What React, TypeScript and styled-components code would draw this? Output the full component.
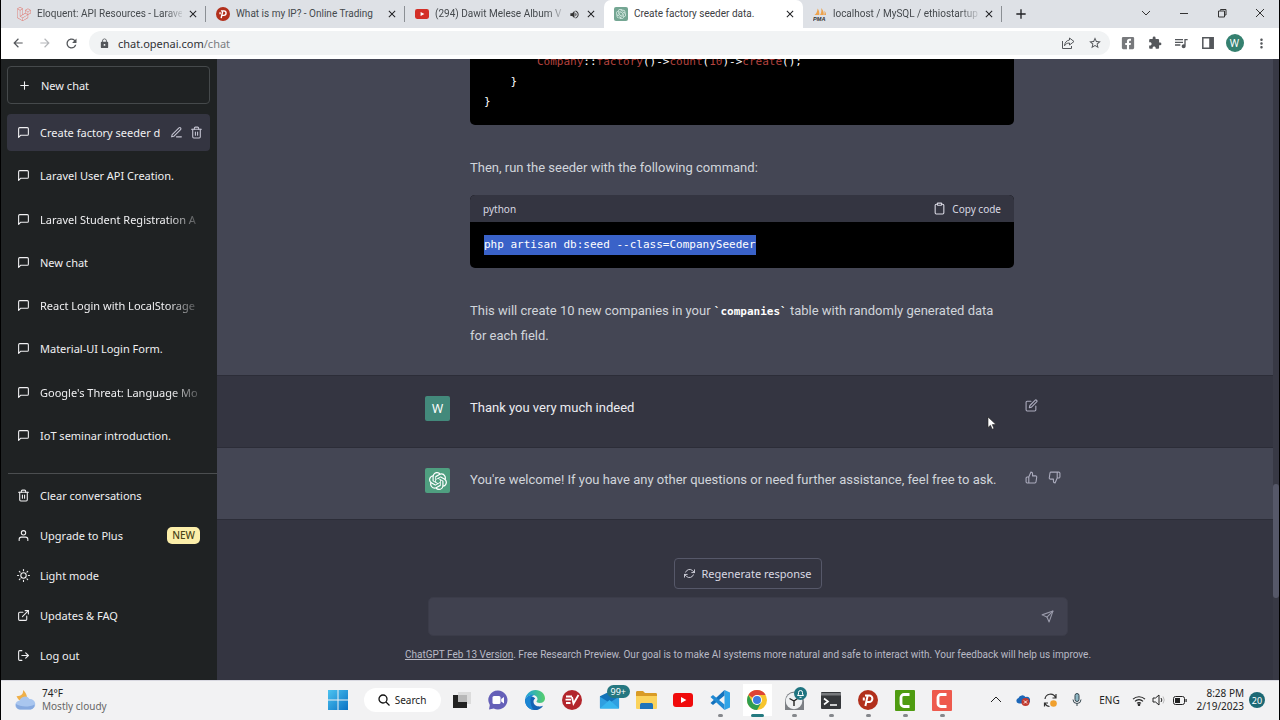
import React from 'react';
import styled, { createGlobalStyle, css } from 'styled-components';
import {
  FiClipboard, FiEdit, FiEdit3, FiExternalLink, FiLogOut, FiMessageSquare, FiPlus,
  FiRefreshCw, FiSend, FiSun, FiThumbsDown, FiThumbsUp, FiTrash2, FiUser,
} from 'react-icons/fi';
import {
  MdArrowBack, MdArrowForward, MdClose, MdExtension, MdLock, MdMoreVert,
  MdQueueMusic, MdRefresh, MdStarBorder, MdVolumeUp, MdAdd,
} from 'react-icons/md';
import { FaFacebookSquare, FaLaravel } from 'react-icons/fa';
import { SiOpenai } from 'react-icons/si';

const humanist = '"Noto Sans", "Open Sans", sans-serif';
const body = 'Roboto, "Liberation Sans", sans-serif';
const mono = '"DejaVu Sans Mono", "Liberation Mono", monospace';

const GlobalStyle = createGlobalStyle`
  * { box-sizing: border-box; }
  body { margin: 0; background: #000; font-family: ${humanist}; font-size: 11px; }
  button, input { font: inherit; color: inherit; }
  button { background: none; border: 0; padding: 0; cursor: pointer; }
  a { color: inherit; }
  p, pre, ul { margin: 0; padding: 0; }
  ul { list-style: none; }
  svg { display: block; flex: none; }
`;

const Desktop = styled.div`
  position: relative;
  display: flex;
  flex-direction: column;
  height: 100vh;
  padding: 0 1px;
  overflow: hidden;
`;

/* ---------- Browser chrome ---------- */

const TabStrip = styled.header`
  display: flex;
  height: 28px;
  flex: none;
  padding-left: 6px;
  background: #dee1e6;
  color: #45494d;
`;

const Tab = styled.div<{ $active?: boolean; $divider?: boolean }>`
  display: flex;
  flex: 0 1 199px;
  min-width: 0;
  align-items: center;
  gap: 6px;
  padding: 0 8px 0 10px;
  font-family: ${body};
  font-size: 10px;
  background-image: ${p => (p.$divider ? 'linear-gradient(#8b8f94, #8b8f94)' : 'none')};
  background-size: 1px 16px;
  background-position: right 6px;
  background-repeat: no-repeat;
  ${p => p.$active && css`
    background-color: #fff;
    border-radius: 7px 7px 0 0;
    color: #3c4043;
  `}
`;

const TabLabel = styled.span<{ $fade?: boolean }>`
  flex: 1;
  min-width: 0;
  overflow: hidden;
  white-space: nowrap;
  line-height: 16px;
  ${p => p.$fade && css`mask-image: linear-gradient(to right, #000 88%, rgba(0, 0, 0, 0.15));`}
`;

const IconButton = styled.button<{ $w?: number; $tone?: string }>`
  display: inline-flex;
  flex: none;
  align-items: center;
  justify-content: center;
  width: ${p => p.$w ?? 14}px;
  color: ${p => p.$tone ?? 'inherit'};
`;

const NewTab = styled(IconButton)`
  width: 38px;
  color: #202124;
`;

const WindowControls = styled.div`
  display: flex;
  margin-left: auto;
  color: #333;
  button { width: 38px; padding-bottom: 3px; }
`;

const Toolbar = styled.nav`
  display: flex;
  flex: none;
  align-items: center;
  height: 31px;
  padding: 0 5px 1px 3px;
  background: #fff;
  color: #54575b;
`;

const AddressBar = styled.div`
  display: flex;
  flex: 1;
  align-items: center;
  height: 24px;
  margin: 0 4px;
  padding: 0 2px 0 10px;
  border-radius: 12px;
  background: #f1f3f4;
`;

const Url = styled.span`
  flex: 1;
  margin-left: 8px;
  color: #7a7d81;
  b { font-weight: 400; color: #303134; }
`;

const Profile = styled.span`
  display: grid;
  place-items: center;
  width: 18px;
  height: 18px;
  border-radius: 50%;
  background: #35806f;
  color: #fff;
  font-size: 10px;
`;

/* ---------- Sidebar ---------- */

const Workspace = styled.div`
  display: flex;
  flex: 1;
  min-height: 0;
`;

const Sidebar = styled.aside`
  display: flex;
  flex: none;
  flex-direction: column;
  width: 216px;
  padding: 7px 0 5px 6px;
  background: #1f2223;
  color: #f0f0f2;
`;

const NewChat = styled.button`
  display: flex;
  flex: none;
  align-items: center;
  gap: 10px;
  height: 38px;
  margin-right: 7px;
  padding: 0 10px;
  border: 1px solid #45494b;
  border-radius: 4px;
`;

const History = styled.ul`
  display: flex;
  flex: 1;
  flex-direction: column;
  justify-content: space-between;
  max-height: 350px;
  margin-right: 7px;
  padding-top: 10px;
`;

const HistoryItem = styled.li<{ $active?: boolean }>`
  display: flex;
  align-items: center;
  height: 37px;
  padding: 0 7px 0 10px;
  gap: 7px;
  border-radius: 4px;
  background: ${p => (p.$active ? '#343541' : 'transparent')};
`;

const HistoryLink = styled.a`
  display: flex;
  flex: 1;
  min-width: 0;
  align-items: center;
  gap: 10px;
  text-decoration: none;
`;

const Title = styled.span<{ $fade?: boolean }>`
  overflow: hidden;
  white-space: nowrap;
  ${p => p.$fade && css`mask-image: linear-gradient(to right, #000 82%, rgba(0, 0, 0, 0.25));`}
`;

const AccountMenu = styled.nav`
  margin: auto 0 0 1px;
  padding: 1px 7px 0 0;
  border-top: 1px solid #4b4e50;
`;

const MenuLink = styled.a`
  display: flex;
  align-items: center;
  gap: 10px;
  height: 40px;
  padding: 0 10px 0 9px;
  text-decoration: none;
`;

const NewBadge = styled.span`
  margin-left: auto;
  padding: 0 5px;
  border-radius: 5px;
  background: #fbeea9;
  color: #4a4418;
  font-size: 10px;
  font-weight: 500;
  line-height: 17px;
`;

/* ---------- Conversation ---------- */

const Main = styled.main`
  display: grid;
  flex: 1;
  min-width: 0;
  grid-template: minmax(0, 1fr) / minmax(0, 1fr);
  background: #343541;
  color: #d4d6df;
`;

const Scroller = styled.div`
  display: flex;
  grid-area: 1 / 1;
  min-height: 0;
`;

const Thread = styled.div`
  display: flex;
  flex: 1;
  min-width: 0;
  flex-direction: column;
  justify-content: flex-end;
  padding-bottom: 160px;
  overflow: hidden;
`;

const Track = styled.div`
  display: grid;
  grid-template-rows: 425fr 114fr 82fr;
  width: 6px;
  background: #383945;
`;

const Thumb = styled.div`
  grid-row: 2;
  border-radius: 3px;
  background: #565869;
`;

const Message = styled.article<{ $bot?: boolean }>`
  display: flex;
  flex: none;
  justify-content: center;
  padding: 20px 0 26px;
  border-bottom: 1px solid #2c2d38;
  background: ${p => (p.$bot ? '#444654' : '#343541')};
  color: ${p => (p.$bot ? '#d1d5db' : '#ececf1')};
`;

const MessageBody = styled.div`
  display: grid;
  grid-template-columns: 25px minmax(0, 544px) 31px;
  column-gap: 20px;
  width: 640px;
`;

const Avatar = styled.span<{ $color: string }>`
  display: grid;
  place-items: center;
  width: 25px;
  height: 25px;
  border-radius: 2px;
  background: ${p => p.$color};
  color: #fff;
  font-size: 12px;
`;

const Prose = styled.div`
  grid-column: 2;
  padding-bottom: 1px;
  font-family: ${body};
  font-size: 13px;
  line-height: 24px;
  code { font-family: ${mono}; font-size: 11px; font-weight: 700; color: #fff; }
`;

const Actions = styled.div`
  display: flex;
  gap: 9px;
  align-self: start;
  margin-left: -10px;
  padding-top: 3px;
  color: #acacbe;
`;

const CodeBlock = styled.div`
  overflow: hidden;
  margin: 15px 0 31px;
  border-radius: 5px;
  background: #000;
`;

const CodeHeader = styled.div`
  display: flex;
  align-items: center;
  justify-content: space-between;
  height: 27px;
  padding: 0 13px;
  background: #343541;
  color: #d9d9e3;
  font-family: ${humanist};
  font-size: 10px;
`;

const CopyButton = styled.button`
  display: flex;
  align-items: center;
  gap: 6px;
`;

const Code = styled.pre`
  padding: 13px 14px;
  color: #fff;
  font-family: ${mono};
  font-size: 11px;
  line-height: 20px;
  span { color: #b5433f; }
  mark { display: inline-block; background: #3a62c8; color: #fff; }
`;

const Footer = styled.footer`
  display: flex;
  grid-area: 1 / 1;
  align-self: end;
  flex-direction: column;
  align-items: center;
  height: 160px;
  padding-top: 38px;
`;

const Regenerate = styled.button`
  display: flex;
  align-items: center;
  gap: 6px;
  height: 31px;
  padding: 0 9px;
  border: 1px solid #565869;
  border-radius: 4px;
  color: #d9d9e3;
`;

const Composer = styled.form`
  display: flex;
  align-items: center;
  width: 100%;
  max-width: 640px;
  height: 39px;
  margin: 8px 0 11px;
  padding-right: 13px;
  border: 1px solid #3b3c49;
  border-radius: 5px;
  background: #40414f;
  color: #9a9bab;
`;

const Prompt = styled.input`
  flex: 1;
  height: 100%;
  padding: 0 13px;
  border: 0;
  outline: 0;
  background: transparent;
`;

const Caption = styled.p`
  color: #b9bac6;
  font-family: ${body};
  font-size: 10px;
  line-height: 16px;
`;

const Pointer = styled.svg`
  position: absolute;
  left: 987px;
  top: 416px;
`;

/* ---------- Taskbar ---------- */

const Taskbar = styled.footer`
  display: grid;
  flex: none;
  grid-template-columns: 1fr auto 1fr;
  align-items: center;
  height: 40px;
  padding-bottom: 1px;
  border-top: 1px solid #d8d8e0;
  background: #f2f2f3;
  color: #222;
  font-size: 10px;
`;

const Weather = styled.div`
  display: flex;
  align-items: center;
  gap: 6px;
  padding-left: 14px;
  line-height: 13px;
  small { display: block; color: #666; font-size: 10px; }
`;

const Apps = styled.div`
  display: flex;
  align-items: center;
`;

const SearchButton = styled.button`
  display: flex;
  align-items: center;
  justify-content: center;
  gap: 5px;
  width: 77px;
  height: 24px;
  margin: 0 2px 0 7px;
  border-radius: 12px;
  background: #fff;
`;

const AppButton = styled.button<{ $state?: 'open' | 'active' }>`
  position: relative;
  display: grid;
  place-items: center;
  width: 37px;
  height: 36px;
  &::after {
    content: '';
    position: absolute;
    bottom: 1px;
    width: ${p => (p.$state === 'active' ? 13 : 5)}px;
    height: ${p => (p.$state ? 3 : 0)}px;
    border-radius: 2px;
    background: ${p => (p.$state === 'active' ? '#247a80' : '#85888c')};
  }
  ${p => p.$state === 'active' && css`background: linear-gradient(#fff, #fff) center / 29px 32px no-repeat;`}
`;

const CountBadge = styled.span`
  position: absolute;
  top: 3px;
  left: 16px;
  padding: 0 4px;
  border-radius: 7px;
  background: #257780;
  color: #fff;
  font-size: 9px;
  line-height: 13px;
`;

const Tray = styled.div`
  display: flex;
  align-items: center;
  justify-content: flex-end;
  padding-right: 14px;
`;

const TrayCell = styled.span<{ $w: number }>`
  display: grid;
  place-items: center;
  width: ${p => p.$w}px;
`;

const Clock = styled.time`
  margin: 0 5px;
  text-align: right;
  line-height: 13px;
`;

const Notices = styled.span`
  display: grid;
  place-items: center;
  width: 16px;
  height: 16px;
  border-radius: 50%;
  background: #1c6975;
  color: #fff;
  font-size: 9px;
`;

/* ---------- Drawings ---------- */

const PIcon = ({ size }: { size: number }) => (
  <svg width={size} height={size} viewBox="0 0 20 20">
    <circle cx="10" cy="10" r="10" fill="#b2301c" />
    <path d="M7 5.500h4.200a2.800 2.800 0 0 1 0 6.400H8.600M9.600 5.800 7.400 16M5.800 7.500v3" fill="none" stroke="#fff" strokeWidth="2" />
  </svg>
);

const YouTube = ({ w, h, color }: { w: number; h: number; color: string }) => (
  <svg width={w} height={h} viewBox="0 0 20 14">
    <rect width="20" height="14" rx="3" fill={color} />
    <path d="M8 4v6l5.400-3z" fill="#fff" />
  </svg>
);

const GptTile = () => (
  <svg width="14" height="14" viewBox="0 0 14 14">
    <rect width="14" height="14" rx="2" fill="#74a693" />
    <g color="#e3f2ec"><SiOpenai x="2" y="2" size={10} /></g>
  </svg>
);

const PhpMyAdmin = () => (
  <svg width="14" height="14" viewBox="0 0 15 14">
    <path d="M1.500 8C3.500 7 4.600 4 5 1c1.500 2 2 5 1.800 7zM7.500 8C9 6 9.200 3.500 8.800.5c2.200 2.500 3 5 2.700 7.500zM12 8c.6-1.500.6-3 .2-4.500C13.500 5 14 6.500 14 8z" fill="#eda34e" />
    <text x="0" y="14" fontSize="6" fontWeight="700" fontStyle="italic" fontFamily="Liberation Sans, sans-serif" fill="#333">PMA</text>
  </svg>
);

const ShareIcon = () => (
  <svg width="14" height="14" viewBox="0 0 14 14" fill="none" stroke="currentColor" strokeLinejoin="round">
    <path d="M1.500 5v7.500h9V10" />
    <path d="M8.500 2 13 5.500 8.500 9V7C6 7 4.500 8 3.500 9.800 3.800 6.500 5.500 4.500 8.500 4z" />
  </svg>
);

const SidePanel = () => (
  <svg width="12" height="12" viewBox="0 0 12 12">
    <path d="M.8.8h10.400v10.400H.8z" fill="none" stroke="currentColor" strokeWidth="1.500" />
    <path d="M7.200 1H11v10H7.200z" fill="currentColor" />
  </svg>
);

const Control = ({ d }: { d: string }) => (
  <svg width="10" height="10" viewBox="0 0 10 10" fill="none" stroke="currentColor"><path d={d} /></svg>
);

const WeatherIcon = () => (
  <svg width="21" height="20" viewBox="0 0 21 20">
    <path d="M8 0c.4 4-1.500 6-6.500 6.300C3 10 6 12 9 11c3.500-1 4.500-6-1-11z" fill="#efb04a" />
    <path d="M5 19.500a4.500 4.500 0 0 1-.3-9A5.500 5.500 0 0 1 14.500 9a5 5 0 0 1 1 10.500z" fill="#a9c6ef" />
    <path d="M5 19.500A4.500 4.500 0 0 1 1 14c4 3 13 3.500 18.500.5a4.500 4.500 0 0 1-4 5z" fill="#86a9df" />
  </svg>
);

const WindowsLogo = () => (
  <svg width="20" height="20" viewBox="0 0 20 20">
    <defs><linearGradient id="win" x1="0" y1="0" x2="1" y2="1"><stop stopColor="#4cc3f0" /><stop offset="1" stopColor="#0a72c4" /></linearGradient></defs>
    <path d="M0 0h9.500v9.500H0zM10.500 0H20v9.500h-9.500zM0 10.500h9.500V20H0zM10.500 10.500H20V20h-9.500z" fill="url(#win)" />
  </svg>
);

const SearchGlass = () => (
  <svg width="12" height="12" viewBox="0 0 12 12" fill="none" stroke="#111" strokeWidth="1.300">
    <circle cx="5" cy="5" r="4" /><path d="m8 8 3.500 3.500" />
  </svg>
);

const TaskView = () => (
  <svg width="20" height="20" viewBox="0 0 20 20">
    <path d="M7 2h13v12H7z" fill="#dcdcdc" />
    <path d="M2 5h5v7h9v6H2z" fill="#222" />
    <path d="M7 5h9v7H7z" fill="#b8b8b8" />
  </svg>
);

const TeamsChat = () => (
  <svg width="20" height="20" viewBox="0 0 20 20">
    <path d="M10 .5a9.500 9.500 0 1 1-4.300 18L1 19.500 1.800 15A9.500 9.500 0 0 1 10 .5z" fill="#6560b8" />
    <rect x="4.500" y="6" width="8" height="8" rx="1.500" fill="#fff" />
    <path d="m13.200 9 2.800-2v6.500l-2.800-2z" fill="#fff" />
  </svg>
);

const EdgeLogo = () => (
  <svg width="20" height="20" viewBox="0 0 20 20">
    <defs>
      <linearGradient id="edgeTop" x1="0" x2="1"><stop stopColor="#1f9fe0" /><stop offset="1" stopColor="#56cf6a" /></linearGradient>
    </defs>
    <path d="M0 10a10 10 0 0 0 13.500 9.400c2-.8 3.500-2 4.500-3.700-4 1.800-9.500.3-9.500-4.200 0-1.500.8-2.500 1.800-3C7 5 1 5.500 0 10z" fill="#1463b4" />
    <path d="M0 10C.5 4.500 5 0 10.500 0 16 0 20 4 20 8.300c0 3-2.300 4.700-5 4.700-2.500 0-3.500-.9-3.500-1.500s1-.8 1-2.400C12.500 7 10.500 5 7.500 5 3.500 5 .5 7.500 0 10z" fill="url(#edgeTop)" />
    <path d="M5.500 10c0-3 2-5 5-5-3.500-1-9 0-10.400 5-.3 5 3.400 9.500 8.900 10C6.500 18 5.500 14 5.500 10z" fill="#1b86d3" />
  </svg>
);

const ExpressVpn = () => (
  <svg width="20" height="20" viewBox="0 0 20 20">
    <circle cx="10" cy="10" r="10" fill="#b3262c" />
    <path d="M4 6.500h6M4 13h4.500M3.500 9.700h5.500M10 7l1.500 6.500L16.500 5" fill="none" stroke="#fff" strokeWidth="1.800" />
  </svg>
);

const MailLogo = () => (
  <svg width="21" height="18" viewBox="0 0 22 18">
    <path d="M1 5 11 0l10 5v12H1z" fill="#1473b8" />
    <path d="M1 5.500 11 12l10-6.500V18H1z" fill="#2f9fe0" />
    <path d="M1 18 11 9l10 9z" fill="#37b5ee" />
  </svg>
);

const Folder = () => (
  <svg width="21" height="18" viewBox="0 0 21 18">
    <path d="M0 1.500C0 .5.500 0 1.500 0H7l2 2h10.500c1 0 1.500.5 1.500 1.500V8H0z" fill="#d99b26" />
    <path d="M0 5h21v11.500c0 1-.5 1.500-1.500 1.500h-18C.5 18 0 17.500 0 16.500z" fill="#fbd35c" />
    <path d="M4 18v-4c0-1.500 1-2 2-2h9c1 0 2 .5 2 2v4z" fill="#1f74ba" />
  </svg>
);

const VsCode = () => (
  <svg width="20" height="20" viewBox="0 0 20 20">
    <path d="M14.500 0 20 2.400v15.200L14.500 20z" fill="#2fa4e7" />
    <path d="M14.500 0v5.500L3 15 .5 13z" fill="#1372bd" />
    <path d="M14.500 20v-5.500L3 5 .5 7z" fill="#2089d2" />
  </svg>
);

const Chrome = () => (
  <svg width="20" height="20" viewBox="0 0 20 20">
    <circle cx="10" cy="10" r="10" fill="#f7c52e" />
    <path d="M10 10 1.340 5A10 10 0 0 1 18.660 5H10z" fill="#dd4436" />
    <path d="M1.340 5A10 10 0 0 0 10 20l4.330-7.500L10 10 5.670 12.500z" fill="#2f9e4f" />
    <circle cx="10" cy="10" r="5" fill="#fff" /><circle cx="10" cy="10" r="4" fill="#3b7de0" />
  </svg>
);

const AlarmClock = () => (
  <svg width="26" height="26" viewBox="0 0 26 26">
    <path d="M4 14a9.500 9.500 0 0 1 19 0v9H4z" fill="#7c7f84" />
    <circle cx="13" cy="14" r="8.300" fill="#eef0f2" />
    <path d="M8.500 11.500 13 14l3.500-2.500M13 14v5" stroke="#222" strokeWidth="1.400" fill="none" />
    <circle cx="19.500" cy="6.500" r="6.500" fill="#1f7480" />
    <path d="M16.500 8.500h6l-1-1.500V5.500a2 2 0 0 0-4 0V7zM18.500 10.300h2" fill="none" stroke="#fff" />
  </svg>
);

const Terminal = () => (
  <svg width="20" height="17" viewBox="0 0 20 17">
    <rect width="20" height="17" rx="1" fill="#36383b" /><path d="M0 1h20v2.500H0z" fill="#77797c" />
    <path d="m3 6.500 4 3-4 3M9 13h7" fill="none" stroke="#fff" strokeWidth="1.600" />
  </svg>
);

const Camtasia = ({ color }: { color: string }) => (
  <svg width="20" height="21" viewBox="0 0 20 21">
    <rect width="20" height="21" rx="1" fill={color} />
    <path d="M14.500 4.500H9a3 3 0 0 0-3 3v6a3 3 0 0 0 3 3h5.500" fill="none" stroke="#fff" strokeWidth="2.800" />
  </svg>
);

const CloudError = () => (
  <svg width="14" height="12" viewBox="0 0 14 12">
    <path d="M3 9.500A2.800 2.800 0 0 1 2.500 4a4 4 0 0 1 7-1A3.200 3.200 0 0 1 12 9.500z" fill="#1c67b8" />
    <circle cx="9.500" cy="8" r="4" fill="#c23b30" /><path d="m8 6.500 3 3m0-3-3 3" stroke="#fff" />
  </svg>
);

const SyncIcon = () => (
  <svg width="15" height="15" viewBox="0 0 15 15" fill="none" stroke="#333" strokeWidth="1.200">
    <path d="M2 6a5.500 5.500 0 0 1 10.500-1.500M13 1v4H9.500M1.500 13.500V10H5M2 10.500c1 2 2.500 3 4.500 3" />
    <circle cx="10.500" cy="10.500" r="3.300" fill="#f0a02e" stroke="none" />
  </svg>
);

const Mic = () => (
  <svg width="10" height="14" viewBox="0 0 10 14" fill="none" stroke="#37474f">
    <rect x="3" y=".5" width="4" height="8" rx="2" fill="#8fb7c4" /><path d="M1 6.500a4 4 0 0 0 8 0M5 10.500V13" />
  </svg>
);

const Wifi = () => (
  <svg width="14" height="11" viewBox="0 0 14 11" fill="none" stroke="#222" strokeWidth="1.100">
    <path d="M1 4.200a8.500 8.500 0 0 1 12 0M3 6.300a5.600 5.600 0 0 1 8 0M5 8.300a2.800 2.800 0 0 1 4 0" /><circle cx="7" cy="9.700" r=".8" fill="#222" />
  </svg>
);

const Speaker = () => (
  <svg width="13" height="12" viewBox="0 0 13 12" fill="none" stroke="#222">
    <path d="M1 4h2.500L7 1v10L3.500 8H1z" strokeLinejoin="round" /><path d="M9 4a3 3 0 0 1 0 4" /><path d="M11 2.500a6 6 0 0 1 0 7" stroke="#bbb" />
  </svg>
);

const Battery = () => (
  <svg width="14" height="9" viewBox="0 0 14 9">
    <rect x=".5" y=".5" width="11" height="8" rx="2" fill="none" stroke="#222" /><path d="M2 2h5v5H2zM12.500 3h1.200v3h-1.200z" fill="#222" />
  </svg>
);

/* ---------- Data ---------- */

const tabs = [
  { label: 'Eloquent: API Resources - Larave', icon: <FaLaravel size={14} color="#e0746c" />, fade: true, divider: true },
  { label: 'What is my IP? - Online Trading', icon: <PIcon size={14} />, divider: true },
  { label: '(294) Dawit Melese Album V', icon: <YouTube w={14} h={10} color="#d32f27" />, fade: true, audio: true },
  { label: 'Create factory seeder data.', icon: <GptTile />, active: true },
  { label: 'localhost / MySQL / ethiostartup', icon: <PhpMyAdmin />, fade: true, divider: true },
];

const chats = [
  { title: 'Create factory seeder d', active: true },
  { title: 'Laravel User API Creation.' },
  { title: 'Laravel Student Registration A', fade: true },
  { title: 'New chat' },
  { title: 'React Login with LocalStorage', fade: true },
  { title: 'Material-UI Login Form.' },
  { title: "Google's Threat: Language Mo", fade: true },
  { title: 'IoT seminar introduction.' },
];

const menu = [
  { label: 'Clear conversations', Icon: FiTrash2 },
  { label: 'Upgrade to Plus', Icon: FiUser, badge: 'NEW' },
  { label: 'Light mode', Icon: FiSun },
  { label: 'Updates & FAQ', Icon: FiExternalLink },
  { label: 'Log out', Icon: FiLogOut },
];

const apps: { name: string; icon: React.ReactNode; state?: 'open' | 'active'; badge?: string }[] = [
  { name: 'Task view', icon: <TaskView /> },
  { name: 'Chat', icon: <TeamsChat /> },
  { name: 'Edge', icon: <EdgeLogo /> },
  { name: 'VPN', icon: <ExpressVpn /> },
  { name: 'Mail', icon: <MailLogo />, badge: '99+' },
  { name: 'Files', icon: <Folder /> },
  { name: 'YouTube', icon: <YouTube w={20} h={14} color="#f00b0b" /> },
  { name: 'Code editor', icon: <VsCode />, state: 'open' },
  { name: 'Chrome', icon: <Chrome />, state: 'active' },
  { name: 'Clock', icon: <AlarmClock />, state: 'open' },
  { name: 'Terminal', icon: <Terminal />, state: 'open' },
  { name: 'Trading', icon: <PIcon size={20} />, state: 'open' },
  { name: 'Camtasia', icon: <Camtasia color="#4f9c11" />, state: 'open' },
  { name: 'Recorder', icon: <Camtasia color="#ee5a4d" />, state: 'open' },
];

function BrowserChrome() {
  return (
    <>
      <TabStrip>
        {tabs.map(t => (
          <Tab key={t.label} $active={t.active} $divider={t.divider}>
            {t.icon}
            <TabLabel $fade={t.fade}>{t.label}</TabLabel>
            {t.audio && <MdVolumeUp size={11} color="#333" />}
            <IconButton aria-label="Close tab" $w={10} $tone="#202124"><MdClose size={12} /></IconButton>
          </Tab>
        ))}
        <NewTab aria-label="New tab"><MdAdd size={16} /></NewTab>
        <WindowControls>
          <IconButton aria-label="Search tabs"><Control d="m1 3 4 4 4-4" /></IconButton>
          <IconButton aria-label="Minimize"><Control d="M1 5.500h8" /></IconButton>
          <IconButton aria-label="Restore"><Control d="M1.500 3h6v6h-6zM3.500 2.500v-1h5.500V7H8" /></IconButton>
          <IconButton aria-label="Close"><Control d="m1 1 8 8M9 1 1 9" /></IconButton>
        </WindowControls>
      </TabStrip>
      <Toolbar>
        <IconButton aria-label="Back" $w={27}><MdArrowBack size={14} /></IconButton>
        <IconButton aria-label="Forward" $w={27} $tone="#b4b6b9"><MdArrowForward size={14} /></IconButton>
        <IconButton aria-label="Reload" $w={27}><MdRefresh size={15} /></IconButton>
        <AddressBar>
          <MdLock size={11} />
          <Url><b>chat.openai.com</b>/chat</Url>
          <IconButton aria-label="Share" $w={27}><ShareIcon /></IconButton>
          <IconButton aria-label="Bookmark" $w={27}><MdStarBorder size={14} /></IconButton>
        </AddressBar>
        <IconButton aria-label="Facebook" $w={27}><FaFacebookSquare size={14} color="#77797c" /></IconButton>
        <IconButton aria-label="Extensions" $w={27}><MdExtension size={14} /></IconButton>
        <IconButton aria-label="Media" $w={26}><MdQueueMusic size={16} /></IconButton>
        <IconButton aria-label="Side panel" $w={27}><SidePanel /></IconButton>
        <IconButton aria-label="Profile" $w={27}><Profile>W</Profile></IconButton>
        <IconButton aria-label="Menu" $w={26}><MdMoreVert size={15} /></IconButton>
      </Toolbar>
    </>
  );
}

function ChatSidebar() {
  return (
    <Sidebar>
      <NewChat><FiPlus size={13} />New chat</NewChat>
      <History>
        {chats.map(c => (
          <HistoryItem key={c.title} $active={c.active}>
            <HistoryLink href="#">
              <FiMessageSquare size={13} />
              <Title $fade={c.fade}>{c.title}</Title>
            </HistoryLink>
            {c.active && (
              <>
                <IconButton aria-label="Rename" $w={13} $tone="#c5c5d2"><FiEdit3 size={13} /></IconButton>
                <IconButton aria-label="Delete" $w={13} $tone="#c5c5d2"><FiTrash2 size={13} /></IconButton>
              </>
            )}
          </HistoryItem>
        ))}
      </History>
      <AccountMenu>
        {menu.map(({ label, Icon, badge }) => (
          <MenuLink href="#" key={label}>
            <Icon size={13} />{label}
            {badge && <NewBadge>{badge}</NewBadge>}
          </MenuLink>
        ))}
      </AccountMenu>
    </Sidebar>
  );
}

function Conversation() {
  return (
    <Main>
      <Scroller>
        <Thread>
          <Message $bot>
            <MessageBody>
              <Prose>
                <CodeBlock>
                  <Code>
                    {'        '}<span>Company</span>::<span>factory</span>()-&gt;<span>count</span>(<span>10</span>)-&gt;<span>create</span>();{'\n    }\n}'}
                  </Code>
                </CodeBlock>
                <p>Then, run the seeder with the following command:</p>
                <CodeBlock>
                  <CodeHeader>
                    python
                    <CopyButton><FiClipboard size={13} />Copy code</CopyButton>
                  </CodeHeader>
                  <Code><mark>php artisan db:seed --class=CompanySeeder</mark></Code>
                </CodeBlock>
                <p>
                  This will create 10 new companies in your <code>`companies`</code> table with randomly generated data
                  <br />
                  for each field.
                </p>
              </Prose>
            </MessageBody>
          </Message>
          <Message>
            <MessageBody>
              <Avatar $color="#43897b">W</Avatar>
              <Prose><p>Thank you very much indeed</p></Prose>
              <Actions><IconButton aria-label="Edit message"><FiEdit size={13} /></IconButton></Actions>
            </MessageBody>
          </Message>
          <Message $bot>
            <MessageBody>
              <Avatar $color="#4f9f80"><SiOpenai size={18} /></Avatar>
              <Prose><p>You're welcome! If you have any other questions or need further assistance, feel free to ask.</p></Prose>
              <Actions>
                <IconButton aria-label="Good response"><FiThumbsUp size={13} /></IconButton>
                <IconButton aria-label="Bad response"><FiThumbsDown size={13} /></IconButton>
              </Actions>
            </MessageBody>
          </Message>
        </Thread>
        <Track><Thumb /></Track>
      </Scroller>
      <Footer>
        <Regenerate><FiRefreshCw size={11} />Regenerate response</Regenerate>
        <Composer>
          <Prompt aria-label="Message" />
          <IconButton type="button" aria-label="Send"><FiSend size={13} /></IconButton>
        </Composer>
        <Caption>
          <a href="#">ChatGPT Feb 13 Version</a>. Free Research Preview. Our goal is to make AI systems more natural and safe to interact with. Your feedback will help us improve.
        </Caption>
      </Footer>
    </Main>
  );
}

function SystemTaskbar() {
  return (
    <Taskbar>
      <Weather><WeatherIcon /><div>74°F<small>Mostly cloudy</small></div></Weather>
      <Apps>
        <AppButton aria-label="Start"><WindowsLogo /></AppButton>
        <SearchButton><SearchGlass />Search</SearchButton>
        {apps.map(a => (
          <AppButton key={a.name} aria-label={a.name} $state={a.state}>
            {a.icon}
            {a.badge && <CountBadge>{a.badge}</CountBadge>}
          </AppButton>
        ))}
      </Apps>
      <Tray>
        <TrayCell $w={27}><Control d="m0 7 5-5 5 5" /></TrayCell>
        <TrayCell $w={27}><CloudError /></TrayCell>
        <TrayCell $w={27}><SyncIcon /></TrayCell>
        <TrayCell $w={27}><Mic /></TrayCell>
        <TrayCell $w={38}>ENG</TrayCell>
        <TrayCell $w={20}><Wifi /></TrayCell>
        <TrayCell $w={19}><Speaker /></TrayCell>
        <TrayCell $w={24}><Battery /></TrayCell>
        <Clock>8:28 PM<br />2/19/2023</Clock>
        <Notices>20</Notices>
      </Tray>
    </Taskbar>
  );
}

export default function App() {
  return (
    <Desktop>
      <GlobalStyle />
      <BrowserChrome />
      <Workspace>
        <ChatSidebar />
        <Conversation />
      </Workspace>
      <SystemTaskbar />
      <Pointer width="10" height="14" viewBox="0 0 10 14">
        <path d="M1 1v10.500l2.500-2.300 1.700 4 1.800-.8-1.700-3.800H9z" fill="#fff" stroke="#222" strokeWidth=".6" />
      </Pointer>
    </Desktop>
  );
}
